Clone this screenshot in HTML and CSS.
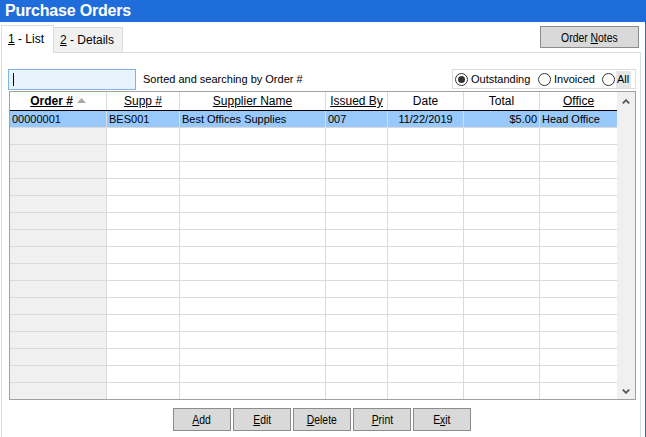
FILE: index.html
```html
<!DOCTYPE html>
<html>
<head>
<meta charset="utf-8">
<title>Purchase Orders</title>
<link rel="stylesheet" href="styles.css">
</head>
<body>
<div class="window">
  <div class="titlebar">Purchase Orders</div>
  <div class="tabstrip">
    <div class="tab tab-active"><u>1</u> - List</div>
    <div class="tab tab-idle"><u>2</u> - Details</div>
    <div class="tab-fill">
      <button class="btn btn-notes"><span class="lbl">Order <u>N</u>otes</span></button>
    </div>
  </div>
  <div class="panel">
    <div class="toolbar">
      <div class="search"><span class="caret"></span></div>
      <span class="hint">Sorted and searching by Order #</span>
      <div class="radios">
        <div class="radio r1"><span class="circle checked"></span><span class="rlabel">Outstanding</span></div>
        <div class="radio r2"><span class="circle"></span><span class="rlabel">Invoiced</span></div>
        <div class="radio r3"><span class="circle"></span><span class="rlabel focus">All</span></div>
      </div>
    </div>
    <div class="grid">
      <div class="table">
        <div class="row head">
          <div class="hc"><span class="bold"><u>Order #</u></span><svg class="sort" width="9" height="5" viewBox="0 0 9 5"><polygon points="0,5 4.5,0 9,5" fill="#a9a9a9"/></svg></div>
          <div class="hc"><u>Supp #</u></div>
          <div class="hc"><u>Supplier Name</u></div>
          <div class="hc"><u>Issued By</u></div>
          <div class="hc">Date</div>
          <div class="hc">Total</div>
          <div class="hc"><u>Office</u></div>
        </div>
        <div class="body">
          <div class="row data selected">
            <div class="c">00000001</div><div class="c">BES001</div><div class="c">Best Offices Supplies</div><div class="c">007</div><div class="c center">11/22/2019</div><div class="c right">$5.00</div><div class="c">Head Office</div>
          </div>
          <div class="row data"><div class="c"></div><div class="c"></div><div class="c"></div><div class="c"></div><div class="c"></div><div class="c"></div><div class="c"></div></div>
          <div class="row data"><div class="c"></div><div class="c"></div><div class="c"></div><div class="c"></div><div class="c"></div><div class="c"></div><div class="c"></div></div>
          <div class="row data"><div class="c"></div><div class="c"></div><div class="c"></div><div class="c"></div><div class="c"></div><div class="c"></div><div class="c"></div></div>
          <div class="row data"><div class="c"></div><div class="c"></div><div class="c"></div><div class="c"></div><div class="c"></div><div class="c"></div><div class="c"></div></div>
          <div class="row data"><div class="c"></div><div class="c"></div><div class="c"></div><div class="c"></div><div class="c"></div><div class="c"></div><div class="c"></div></div>
          <div class="row data"><div class="c"></div><div class="c"></div><div class="c"></div><div class="c"></div><div class="c"></div><div class="c"></div><div class="c"></div></div>
          <div class="row data"><div class="c"></div><div class="c"></div><div class="c"></div><div class="c"></div><div class="c"></div><div class="c"></div><div class="c"></div></div>
          <div class="row data"><div class="c"></div><div class="c"></div><div class="c"></div><div class="c"></div><div class="c"></div><div class="c"></div><div class="c"></div></div>
          <div class="row data"><div class="c"></div><div class="c"></div><div class="c"></div><div class="c"></div><div class="c"></div><div class="c"></div><div class="c"></div></div>
          <div class="row data"><div class="c"></div><div class="c"></div><div class="c"></div><div class="c"></div><div class="c"></div><div class="c"></div><div class="c"></div></div>
          <div class="row data"><div class="c"></div><div class="c"></div><div class="c"></div><div class="c"></div><div class="c"></div><div class="c"></div><div class="c"></div></div>
          <div class="row data"><div class="c"></div><div class="c"></div><div class="c"></div><div class="c"></div><div class="c"></div><div class="c"></div><div class="c"></div></div>
          <div class="row data"><div class="c"></div><div class="c"></div><div class="c"></div><div class="c"></div><div class="c"></div><div class="c"></div><div class="c"></div></div>
          <div class="row data"><div class="c"></div><div class="c"></div><div class="c"></div><div class="c"></div><div class="c"></div><div class="c"></div><div class="c"></div></div>
          <div class="row data"><div class="c"></div><div class="c"></div><div class="c"></div><div class="c"></div><div class="c"></div><div class="c"></div><div class="c"></div></div>
          <div class="row data"><div class="c"></div><div class="c"></div><div class="c"></div><div class="c"></div><div class="c"></div><div class="c"></div><div class="c"></div></div>
        </div>
      </div>
      <div class="vscroll">
        <svg width="8" height="5" viewBox="0 0 8 5"><polyline points="0.8,4.4 4,1.2 7.2,4.4" fill="none" stroke="#555" stroke-width="1.8"/></svg>
        <svg width="8" height="5" viewBox="0 0 8 5"><polyline points="0.8,0.6 4,3.8 7.2,0.6" fill="none" stroke="#555" stroke-width="1.8"/></svg>
      </div>
    </div>
    <div class="actions">
      <button class="btn btn-act"><span class="lbl"><u>A</u>dd</span></button>
      <button class="btn btn-act"><span class="lbl"><u>E</u>dit</span></button>
      <button class="btn btn-act"><span class="lbl"><u>D</u>elete</span></button>
      <button class="btn btn-act"><span class="lbl"><u>P</u>rint</span></button>
      <button class="btn btn-act"><span class="lbl">E<u>x</u>it</span></button>
    </div>
  </div>
</div>
</body>
</html>
```
FILE: styles.css
```css
* { box-sizing: border-box; }
html, body { margin: 0; padding: 0; background: #ffffff; }
body { font-family: "Liberation Sans", Arial, sans-serif; color: #000; }

.window {
  width: 646px;
  height: 437px;
  overflow: hidden;
  background: #ffffff;
  border-right: 1px solid #1f6cdb;
}

.titlebar {
  height: 22px;
  line-height: 22px;
  background: #1f6cdb;
  color: #ffffff;
  font-weight: bold;
  font-size: 16px;
  letter-spacing: -0.2px;
  padding-left: 5px;
}

.tabstrip {
  margin-left: 1px;
  width: 640px;
  height: 31px;
  display: flex;
  align-items: flex-end;
}
.tab { font-size: 12px; padding-left: 6px; white-space: nowrap; }
.tab-active {
  width: 53px;
  height: 28px;
  line-height: 26px;
  border: 1px solid #dcdcdc;
  border-bottom: none;
  background: #ffffff;
}
.tab-idle {
  width: 69px;
  height: 26px;
  line-height: 24px;
  border-top: 1px solid #dcdcdc;
  border-right: 1px solid #dcdcdc;
  border-bottom: 1px solid #dcdcdc;
  background: #f0f0f0;
}
.tab-fill {
  flex: 1;
  height: 31px;
  border-bottom: 1px solid #dcdcdc;
  display: flex;
  justify-content: flex-end;
  align-items: flex-start;
  padding: 4px 2px 0 0;
}

.btn {
  margin: 0;
  padding: 0;
  background: #d9d9d9;
  border: 1px solid #8c8c8c;
  border-radius: 0;
  font-family: "Liberation Sans", Arial, sans-serif;
  color: #000;
  display: flex;
  align-items: center;
  justify-content: center;
}
.btn .lbl {
  display: inline-block;
  font-size: 13px;
  transform: scaleX(0.8);
  white-space: nowrap;
}
.btn-notes { width: 99px; height: 22px; }
.btn-act { width: 58px; height: 23px; }

.panel {
  margin-left: 1px;
  width: 640px;
  height: 384px;
  border-left: 1px solid #dcdcdc;
  border-right: 1px solid #dcdcdc;
  padding: 16px 4px 0 6px;
  display: flex;
  flex-direction: column;
}

.toolbar {
  height: 21px;
  display: flex;
  align-items: flex-start;
}
.search {
  width: 128px;
  height: 21px;
  border: 1px solid #7eb4ea;
  background: #e8f4fd;
  display: flex;
  align-items: center;
  padding-left: 4px;
}
.caret { width: 1px; height: 13px; background: #000; }
.hint {
  margin-left: 7px;
  font-size: 11px;
  line-height: 21px;
  white-space: nowrap;
}
.radios {
  margin-left: auto;
  width: 184px;
  height: 20px;
  border: 1px solid #dcdcdc;
  display: flex;
  align-items: center;
  padding-left: 2px;
}
.radio { display: flex; align-items: center; font-size: 11px; white-space: nowrap; }
.r1 { width: 83px; }
.r2 { width: 64px; }
.circle {
  width: 13px;
  height: 13px;
  border: 1px solid #333;
  border-radius: 50%;
  background: #fff;
  margin-right: 3px;
  display: flex;
  align-items: center;
  justify-content: center;
  flex: none;
}
.circle.checked::after {
  content: "";
  width: 7px;
  height: 7px;
  border-radius: 50%;
  background: #333;
}
.rlabel { line-height: 17px; }
.r3 .circle { margin-right: 1px; }
.rlabel.focus { background: #e6e6e6; padding: 0 2px 0 1px; }

.grid {
  margin-top: 1px;
  margin-left: 1px;
  height: 309px;
  border: 1px solid #a0a0a0;
  display: flex;
}
.table { width: 607px; }
.row {
  display: grid;
  grid-template-columns: 97px 73px 146px 62px 76px 76px 77px;
}
.head {
  height: 19px;
  border-bottom: 1px solid #000;
}
.hc {
  font-size: 12px;
  line-height: 18px;
  text-align: center;
  border-right: 1px solid #dadada;
  white-space: nowrap;
  overflow: hidden;
  display: flex;
  justify-content: center;
  align-items: center;
}
.hc:last-child, .c:last-child { border-right: none; }
.bold { font-weight: bold; }
.sort { margin-left: 4px; margin-top: -2px; }
.body { height: 288px; overflow: hidden; }
.data { height: 17px; border-bottom: 1px solid #dadada; }
.c {
  font-size: 11px;
  line-height: 16px;
  padding: 0 2px;
  border-right: 1px solid #dadada;
  white-space: nowrap;
  overflow: hidden;
}
.data .c:first-child { background: #f0f0f0; }
.data.selected .c { background: #99c9fb; }
.center { text-align: center; }
.right { text-align: right; }

.vscroll {
  width: 18px;
  background: #f0f0f0;
  display: flex;
  flex-direction: column;
  justify-content: space-between;
  align-items: center;
  padding: 7px 0 5px 0;
}

.actions {
  margin-top: 8px;
  display: flex;
  justify-content: center;
  gap: 2px;
}
```
